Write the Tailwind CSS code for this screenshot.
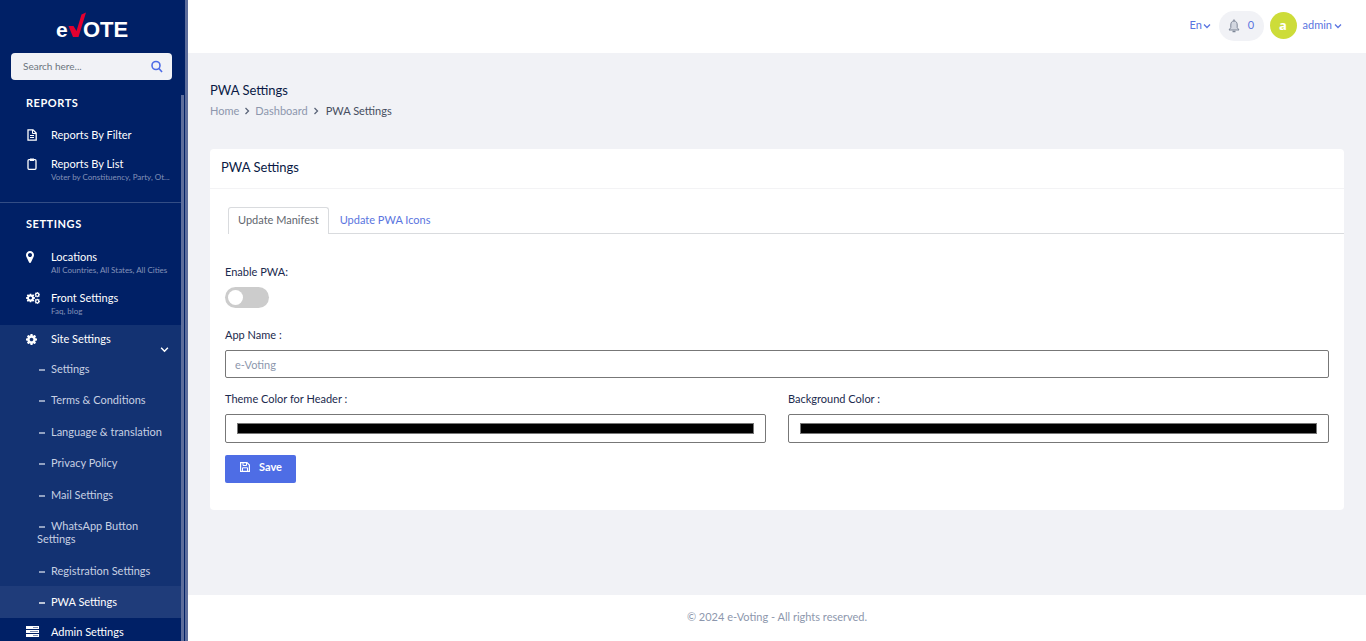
<!DOCTYPE html>
<html lang="en">
<head>
  <meta charset="UTF-8">
  <meta name="viewport" content="width=device-width, initial-scale=1.0">
  <title>PWA Settings</title>
  <script src="https://cdn.jsdelivr.net/npm/@tailwindcss/browser@4"></script>
</head>
<body class="flex min-h-screen bg-[#f1f2f6] font-['Lato',sans-serif] text-[11px] text-[#1b2a4e]">

  <!-- shared icons -->
  <svg class="hidden">
    <symbol id="cog" viewBox="0 -128 1536 1536">
      <path fill="currentColor" d="M1024 640q0-106-75-181t-181-75-181 75-75 181 75 181 181 75 181-75 75-181zm512-109v222q0 12-8 23t-20 13l-185 28q-19 54-39 91 35 50 107 138 10 12 10 25t-9 23q-27 37-99 108t-94 71q-12 0-26-9l-138-108q-44 23-91 38-16 136-29 186-7 28-36 28h-222q-14 0-24.5-8.5t-11.5-21.5l-28-184q-49-16-90-37l-141 107q-10 9-25 9-14 0-25-11-126-114-165-168-7-10-7-23 0-12 8-23 15-21 51-66.5t54-70.5q-27-50-41-99l-183-27q-13-2-21-12.5t-8-23.5v-222q0-12 8-23t19-13l186-28q14-46 39-92-40-57-107-138-10-12-10-24 0-10 9-23 26-36 98.5-107.5t94.5-71.5q13 0 26 10l138 107q44-23 91-38 16-136 29-186 7-28 36-28h222q14 0 24.5 8.5t11.5 21.5l28 184q49 16 90 37l142-107q9-9 24-9 13 0 25 10 129 119 165 170 7 8 7 22 0 12-8 23-15 21-51 66.5t-54 70.5q26 50 41 98l183 28q13 2 21 12.5t8 23.5z"/>
    </symbol>
    <symbol id="chevron" viewBox="0 0 8 8">
      <path d="M1 2.5 4 5.5 7 2.5" fill="none" stroke="currentColor" stroke-width="1.3"/>
    </symbol>
  </svg>

  <!-- Sidebar -->
  <aside class="sticky top-0 flex h-screen w-[188px] shrink-0 overflow-hidden border-r-[3px] border-[#5d6d9b] bg-[#002066] text-white">
    <div class="flex min-w-0 grow flex-col">
      <a href="#" aria-label="eVOTE" class="flex h-[53px] shrink-0 items-center justify-center">
        <svg width="72" height="30" viewBox="0 0 72 30" class="font-['Liberation_Sans',sans-serif] font-bold">
          <text x="0" y="25" font-size="21" fill="#fff">e</text>
          <text x="27" y="25" font-size="22" fill="#fff">OTE</text>
          <path d="M12.500 14H17.500L20.500 19 25.500 2.500 30 0.500 22.500 25H17Z" fill="#e4002f"/>
        </svg>
      </a>
      <form class="mr-3 ml-[11px] flex h-[27px] shrink-0 items-center rounded-sm bg-[#f1f2f6] pr-[9px] pb-px pl-3">
        <input type="search" aria-label="Search" placeholder="Search here..." class="min-w-0 grow text-[10px] text-[#333] placeholder-[#6c757d] outline-none">
        <button aria-label="Search" class="text-[#4e6be6]">
          <svg class="mt-px" width="13" height="13" viewBox="0 0 13 13" fill="none" stroke="currentColor" stroke-width="1.6"><circle cx="6" cy="5.500" r="4"/><path d="m9 8.500 3 3.500"/></svg>
        </button>
      </form>

      <nav class="mt-[15px] min-h-0 grow overflow-hidden border-r-[3px] border-[#5d6d9b]">
        <h2 class="pl-[26px] leading-4 font-bold tracking-wider">REPORTS</h2>
        <a href="#" class="mt-[17px] flex px-[26px] leading-[14px]">
          <svg class="mt-px mr-[13px] shrink-0" width="12" height="12" viewBox="0 0 12 12"><path d="M2 .8h5L10.200 4v7.200H2Z" fill="none" stroke="currentColor" stroke-width="1.300"/><path d="M6.500 1v3.500H10M4 6.500h4M4 8.500h4" fill="none" stroke="currentColor"/></svg>
          <span class="whitespace-nowrap">Reports By Filter</span>
        </a>
        <a href="#" class="mt-[15px] flex pl-[26px] leading-[14px]">
          <svg class="mt-px mr-[13px] shrink-0" width="12" height="12" viewBox="0 0 12 12"><rect x="2" y="1.700" width="8" height="9.600" rx="1" fill="none" stroke="currentColor" stroke-width="1.300"/><path d="M4 .5h4v2.500H4Z" fill="currentColor"/></svg>
          <span>
            <span class="block">Reports By List</span>
            <small class="block whitespace-nowrap text-[8px] leading-3 text-[#8492b8]">Voter by Constituency, Party, Ot...</small>
          </span>
        </a>
        <hr class="mt-[19px] border-[#334d85]">

        <h2 class="mt-[13px] pl-[26px] leading-4 font-bold tracking-wider">SETTINGS</h2>
        <a href="#" class="mt-[18px] flex pl-[26px] leading-[14px]">
          <svg class="mt-px mr-[17px] shrink-0" width="8" height="12" viewBox="0 0 1024 1536"><path fill="currentColor" d="M768 512q0-106-75-181t-181-75-181 75-75 181 75 181 181 75 181-75 75-181zm256 0q0 109-33 179l-364 774q-16 33-47.500 52t-67.500 19-67.500-19-46.500-52l-365-774q-33-70-33-179 0-212 150-362t362-150 362 150 150 362z"/></svg>
          <span>
            <span class="block">Locations</span>
            <small class="block whitespace-nowrap text-[8px] leading-3 text-[#8492b8]">All Countries, All States, All Cities</small>
          </span>
        </a>
        <a href="#" class="mt-[15px] flex pl-[26px] leading-[14px]">
          <svg class="mt-px mr-[11px] shrink-0" width="14" height="12"><use href="#cog" x="0" y="1.500" width="9" height="9"/><use href="#cog" x="8.500" y="0" width="5.500" height="5.500"/><use href="#cog" x="8.500" y="6.500" width="5.500" height="5.500"/></svg>
          <span>
            <span class="block">Front Settings</span>
            <small class="block text-[8px] leading-3 text-[#8492b8]">Faq, blog</small>
          </span>
        </a>

        <div class="mt-2 bg-[#133272]">
          <a href="#" class="flex pt-[7px] pl-[26px] leading-[14px]">
            <svg class="mt-[2px] mr-[14px] shrink-0" width="11" height="11"><use href="#cog"/></svg>
            <span class="grow">Site Settings</span>
            <svg class="mt-[13px] mr-3 shrink-0" width="9" height="9"><use href="#chevron"/></svg>
          </a>
          <ul class="-mt-px leading-[13px] text-[#c7d0e2]">
            <li class="pr-3 pl-[37px] even:pb-px"><a href="#" class="block py-[9px]"><span class="mr-[6px] ml-[2px] inline-block h-[2px] w-[6px] bg-current/70 align-middle"></span>Settings</a></li>
            <li class="pr-3 pl-[37px] even:pb-px"><a href="#" class="block py-[9px]"><span class="mr-[6px] ml-[2px] inline-block h-[2px] w-[6px] bg-current/70 align-middle"></span>Terms &amp; Conditions</a></li>
            <li class="pr-3 pl-[37px] even:pb-px"><a href="#" class="block py-[9px]"><span class="mr-[6px] ml-[2px] inline-block h-[2px] w-[6px] bg-current/70 align-middle"></span>Language &amp; translation</a></li>
            <li class="pr-3 pl-[37px] even:pb-px"><a href="#" class="block py-[9px]"><span class="mr-[6px] ml-[2px] inline-block h-[2px] w-[6px] bg-current/70 align-middle"></span>Privacy Policy</a></li>
            <li class="pr-3 pl-[37px] even:pb-px"><a href="#" class="block py-[9px]"><span class="mr-[6px] ml-[2px] inline-block h-[2px] w-[6px] bg-current/70 align-middle"></span>Mail Settings</a></li>
            <li class="pr-3 pl-[37px] even:pb-px"><a href="#" class="block py-[9px]"><span class="mr-[6px] ml-[2px] inline-block h-[2px] w-[6px] bg-current/70 align-middle"></span>WhatsApp Button Settings</a></li>
            <li class="pr-3 pl-[37px] even:pb-px"><a href="#" class="block py-[9px]"><span class="mr-[6px] ml-[2px] inline-block h-[2px] w-[6px] bg-current/70 align-middle"></span>Registration Settings</a></li>
            <li class="bg-[#1f3c7a] pr-3 pl-[37px] text-white even:pb-px"><a href="#" class="block py-[9px]"><span class="mr-[6px] ml-[2px] inline-block h-[2px] w-[6px] bg-current/70 align-middle"></span>PWA Settings</a></li>
          </ul>
        </div>
        <a href="#" class="flex pt-[7px] pl-[26px] leading-[14px]">
          <svg class="mt-px mr-3 shrink-0" width="13" height="12" viewBox="0 0 13 12" fill="currentColor"><path d="M0 0h13v3H0ZM0 4h13v3H0ZM0 8h13v3H0Z"/><path d="M7 1.500h5M4 5.500h8M7 9.500h5" stroke="#002066" stroke-opacity=".5"/></svg>
          <span>Admin Settings</span>
        </a>
      </nav>
    </div>
    <div class="w-px shrink-0"></div>
  </aside>

  <div class="flex min-w-0 grow flex-col">
    <!-- Top bar -->
    <header class="flex h-[54px] items-center justify-end border-b border-[#f1f2f6] bg-white pr-6 pb-[2px] text-[#5a75e0]">
      <div class="flex items-center">
        <select aria-label="Language" class="appearance-none">
          <option>En</option>
        </select>
        <svg width="8" height="8"><use href="#chevron"/></svg>
      </div>
      <button class="ml-2 flex h-[30px] w-[45px] items-center justify-center gap-2 rounded-full bg-[#f1f2f6]">
        <svg width="12" height="14" viewBox="0 0 12 14"><path d="M6 2C3.500 2 2.800 4 2.800 6v2.500L1 11h10L9.200 8.500V6C9.200 4 8.500 2 6 2Z" fill="#d3d7e0" stroke="#7e8798"/><path d="M6 .5V2M4.500 12.500h3" stroke="#7e8798" stroke-width="1.400"/></svg>
        0
      </button>
      <button class="ml-[6px] flex items-center">
        <span class="flex size-[27px] items-center justify-center rounded-full bg-[#cddc39] font-['Open_Sans',sans-serif] text-[13px] font-bold text-white">a</span>
        <span class="ml-[6px]">admin</span>
        <svg class="ml-[2px]" width="8" height="8"><use href="#chevron"/></svg>
      </button>
    </header>

    <main class="grow px-[22px] pt-[27px] pb-[85px]">
      <h1 class="text-[13px] leading-[18px] text-[#0a1a45]">PWA Settings</h1>
      <nav class="mt-[3px] flex items-center leading-[18px] text-[#8d97ad]">
        <a href="#">Home</a>
        <svg class="mx-1 -rotate-90 text-[#5c6579]" width="8" height="8"><use href="#chevron"/></svg>
        <a href="#">Dashboard</a>
        <svg class="mr-[6px] ml-1 -rotate-90 text-[#5c6579]" width="8" height="8"><use href="#chevron"/></svg>
        <span class="text-[#464e5f]">PWA Settings</span>
      </nav>

      <section class="mt-[29px] rounded bg-white pb-[27px]">
        <h2 class="border-b border-[#f3f3f5] px-[11px] pt-[9px] pb-3 text-[13px] leading-[18px] text-[#0a1a45]">PWA Settings</h2>

        <div class="mt-[18px] ml-[18px] flex border-b border-[#d9dbde] leading-[18px]">
          <a href="#" class="-mb-px rounded-t-[3px] border border-b-0 border-[#d9dbde] bg-white px-[9px] pt-[3px] pb-[5px] text-[#5f666e]">Update Manifest</a>
          <a href="#" class="px-[11px] pt-1 pb-1 text-[#5a75e0]">Update PWA Icons</a>
        </div>

        <form class="px-[15px] pt-[29px] leading-[18px]">
          <label for="enablePwa" class="block">Enable PWA:</label>
          <input id="enablePwa" type="checkbox" class="mt-[6px] block h-[21px] w-11 appearance-none rounded-full bg-[#ccc] before:mt-[3px] before:ml-[3px] before:block before:size-[15px] before:rounded-full before:bg-white checked:bg-[#4e6be6] checked:before:ml-[26px]">

          <label for="appName" class="mt-[18px] block">App Name :</label>
          <input id="appName" type="text" value="e-Voting" class="mt-[6px] block h-7 w-full rounded-xs border border-[#777] px-[9px] text-[#8d97ad]">

          <div class="mt-3 grid grid-cols-2 gap-[22px]">
            <div>
              <label for="themeColor" class="block">Theme Color for Header :</label>
              <input id="themeColor" type="color" value="#000000" class="mt-[6px] block h-[29px] w-full rounded-xs border border-[#777] px-[9px] py-1">
            </div>
            <div>
              <label for="bgColor" class="block">Background Color :</label>
              <input id="bgColor" type="color" value="#000000" class="mt-[6px] block h-[29px] w-full rounded-xs border border-[#777] px-[9px] py-1">
            </div>
          </div>

          <button type="button" class="mt-3 flex h-7 w-[71px] items-center gap-[9px] rounded-xs bg-[#4e6de5] pb-1 pl-[15px] font-bold text-white">
            <svg width="10" height="10" viewBox="0 0 10 10" fill="none" stroke="currentColor"><path d="M.6.6H7L9.400 3v6.400H.6Z" stroke-width="1.200"/><path d="M2.500 9V5.800h5V9M3 1v2.500h3.500V1"/></svg>
            Save
          </button>
        </form>
      </section>
    </main>

    <footer class="bg-white pt-[13px] pb-[15px] text-center leading-[18px] text-[#8d97ad]">© 2024 e-Voting - All rights reserved.</footer>
  </div>

</body>
</html>
